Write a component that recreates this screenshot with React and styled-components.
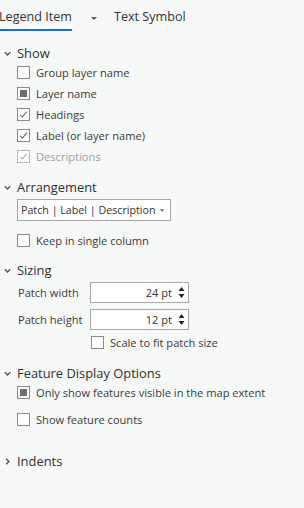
import React from "react";
import styled, { createGlobalStyle } from "styled-components";

const Global = createGlobalStyle`
  html, body { margin: 0; padding: 0; background: #f7f8f8; }
  body { font-family: "Open Sans", "Noto Sans", sans-serif; color: #3a3a3a; }
`;

const Page = styled.div`
  width: 304px;
  height: 508px;
  background: #f7f8f8;
  display: flex;
  flex-direction: column;
  overflow: hidden;
`;

const TabBar = styled.div`
  height: 31px;
  display: flex;
  align-items: stretch;
  margin-left: -1px;
`;

const Tab = styled.div`
  font-size: 12.6px;
  color: #333;
  display: flex;
  align-items: center;
  padding-top: 4px;
  box-sizing: border-box;
  border-bottom: 2px solid ${(p) => (p.$active ? "#1b72c4" : "transparent")};
  margin-right: ${(p) => p.$mr || 0}px;
`;

const TabArrow = styled.div`
  width: 0;
  height: 0;
  border-left: 3px solid transparent;
  border-right: 3px solid transparent;
  border-top: 3px solid #555;
  align-self: center;
  margin-top: 6px;
  margin-right: 17px;
`;

const Section = styled.div`
  display: flex;
  flex-direction: column;
  margin-top: ${(p) => p.$mt}px;
`;

const Header = styled.div`
  height: 18px;
  display: flex;
  align-items: center;
  font-size: 12.9px;
  color: #2f2f2f;
`;

const Chevron = styled.svg`
  width: 7px;
  height: 7px;
  margin-left: 4px;
  margin-right: 6px;
  flex: none;
`;

const Row = styled.div`
  height: 21px;
  display: flex;
  align-items: center;
  padding-left: ${(p) => p.$indent ?? 17}px;
  margin-top: ${(p) => p.$mt || 0}px;
  font-size: 11.1px;
  color: ${(p) => (p.$disabled ? "#a0a0a0" : "#3a3a3a")};
`;

const Box = styled.div`
  width: 11px;
  height: 11px;
  border: 1px solid ${(p) => (p.$disabled ? "#b8b8b8" : "#8a8a8a")};
  background: #fff;
  margin-right: 6px;
  display: flex;
  align-items: center;
  justify-content: center;
  flex: none;
`;

const Fill = styled.div`
  width: 7px;
  height: 7px;
  background: #6f6f6f;
`;

const Check = ({ state, disabled }) => (
  <Box $disabled={disabled}>
    {state === "mixed" && <Fill />}
    {state === "checked" && (
      <svg width="9" height="9" viewBox="0 0 9 9">
        <path
          d="M1.2 4.8 L3.4 7 L7.8 1.6"
          fill="none"
          stroke={disabled ? "#b0b0b0" : "#666"}
          strokeWidth="1.1"
        />
      </svg>
    )}
  </Box>
);

const Select = styled.div`
  margin-left: 17px;
  margin-top: 3px;
  width: 154px;
  height: 22px;
  box-sizing: border-box;
  border: 1px solid #a8a8a8;
  background: #fff;
  display: flex;
  align-items: center;
  padding-left: 3px;
  padding-right: 6px;
  font-size: 10.7px;
  color: #333;
  justify-content: space-between;
`;

const SmallTri = styled.div`
  width: 0;
  height: 0;
  border-left: 2.5px solid transparent;
  border-right: 2.5px solid transparent;
  border-top: 3px solid #777;
`;

const FieldRow = styled.div`
  height: 21px;
  display: flex;
  align-items: center;
  margin-top: ${(p) => p.$mt}px;
  padding-left: 18px;
  font-size: 11.1px;
  color: #3a3a3a;
`;

const FieldLabel = styled.div`
  width: 72px;
`;

const Input = styled.div`
  width: 99px;
  height: 21px;
  box-sizing: border-box;
  border: 1px solid #a8a8a8;
  background: #fff;
  display: flex;
  align-items: center;
  justify-content: flex-end;
  padding-right: 3px;
  font-size: 11.1px;
  color: #333;
`;

const Spin = styled.svg`
  width: 7px;
  height: 13px;
  margin-left: 6px;
`;

const Spinner = () => (
  <Spin viewBox="0 0 7 13">
    <path d="M0.5 5 L3.5 1 L6.5 5 Z" fill="#222" />
    <path d="M0.5 8 L3.5 12 L6.5 8 Z" fill="#222" />
  </Spin>
);

const Down = () => (
  <Chevron viewBox="0 0 7 7">
    <path d="M0.8 2.2 L3.5 4.9 L6.2 2.2" fill="none" stroke="#555" strokeWidth="1.4" />
  </Chevron>
);

const Right = () => (
  <Chevron viewBox="0 0 7 7">
    <path d="M2.2 0.8 L4.9 3.5 L2.2 6.2" fill="none" stroke="#555" strokeWidth="1.4" />
  </Chevron>
);

export default function App() {
  return (
    <Page>
      <Global />
      <TabBar>
        <Tab $active $mr={19}>Legend Item</Tab>
        <TabArrow />
        <Tab>Text Symbol</Tab>
      </TabBar>

      <Section $mt={13}>
        <Header><Down />Show</Header>
        <Row><Check />Group layer name</Row>
        <Row><Check state="mixed" />Layer name</Row>
        <Row><Check state="checked" />Headings</Row>
        <Row><Check state="checked" />Label (or layer name)</Row>
        <Row $disabled><Check state="checked" disabled />Descriptions</Row>
      </Section>

      <Section $mt={11}>
        <Header><Down />Arrangement</Header>
        <Select>
          <span>Patch | Label | Description</span>
          <SmallTri />
        </Select>
        <Row $mt={9}><Check />Keep in single column</Row>
      </Section>

      <Section $mt={10}>
        <Header><Down />Sizing</Header>
        <FieldRow $mt={3}>
          <FieldLabel>Patch width</FieldLabel>
          <Input>24 pt<Spinner /></Input>
        </FieldRow>
        <FieldRow $mt={6}>
          <FieldLabel>Patch height</FieldLabel>
          <Input>12 pt<Spinner /></Input>
        </FieldRow>
        <Row $indent={91} $mt={2}><Check />Scale to fit patch size</Row>
      </Section>

      <Section $mt={11}>
        <Header><Down />Feature Display Options</Header>
        <Row><Check state="mixed" />Only show features visible in the map extent</Row>
        <Row $mt={6}><Check />Show feature counts</Row>
      </Section>

      <Section $mt={22}>
        <Header><Right />Indents</Header>
      </Section>
    </Page>
  );
}
